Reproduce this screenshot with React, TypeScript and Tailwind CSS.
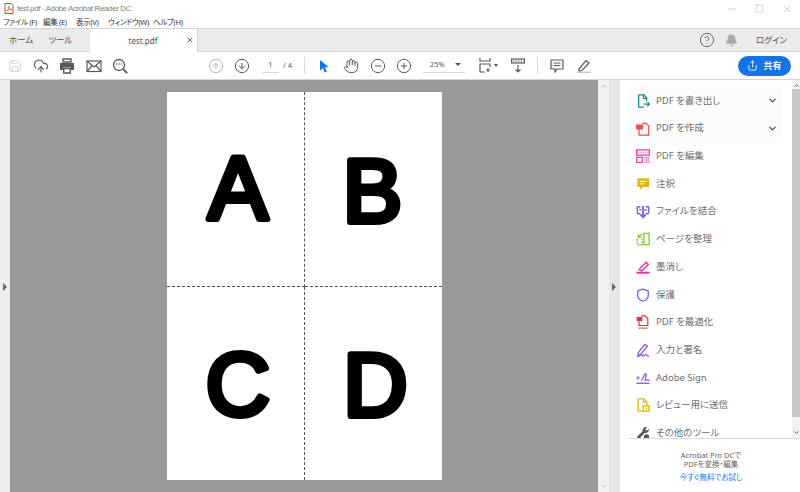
import { Bell, ChevronDown, ChevronUp, CircleArrowDown, CircleArrowUp, CircleHelp, CircleMinus, CirclePlus, CloudUpload, Hand, Minus, Save, Share, Square, X } from "lucide-react";

const font = "font-['Noto_Sans','Noto_Sans_CJK_JP',sans-serif] [font-feature-settings:'palt']";

// sidebar icons, 16x16 box
const icons: Record<string, React.ReactNode> = {
  export: (
    <g fill="none" stroke="#14908f" strokeWidth="1.500">
      <path d="M3 1h6l3 3v4M3 1v14h6" />
      <path d="M8.500 1v4h4" />
      <path d="M9 11.500h6M13 9l2.300 2.500-2.300 2.500" />
    </g>
  ),
  create: (
    <g fill="none" stroke="#ee4d4d" strokeWidth="1.400">
      <path d="M7 1.500h4.500l3 3V15H3.500V8" />
      <path d="M.8 3.500h6.500V8H.8z" fill="#ee4d4d" />
    </g>
  ),
  edit: (
    <g fill="none" stroke="#e6399b" strokeWidth="1.400">
      <rect x=".8" y="1" width="14.400" height="6" />
      <rect x=".8" y="9.500" width="6.400" height="6" />
      <path d="M9.500 10h6M9.500 12.500h6M9.500 15h6" strokeWidth="1" />
      <path d="M2 4h12" strokeWidth="2" strokeOpacity=".35" />
    </g>
  ),
  note: (
    <g>
      <path d="M1.500 1.500h13.500v10H7.500l-3 3v-3H1.500z" fill="#e0b71f" />
      <path d="M4.500 5h7.500M4.500 7.800h5" stroke="#fff" strokeWidth="1.100" />
    </g>
  ),
  combine: (
    <g fill="none" stroke="#6a5ff0" strokeWidth="1.500">
      <path d="M5 2H2.500a1.500 1.500 0 0 0-1 2.500v4a1.500 1.500 0 0 0 1 1.500H5M11 2h2.500a1.500 1.500 0 0 1 1 2.500v4a1.500 1.500 0 0 1-1 1.500H11" />
      <path d="M8 1v12.500M5 11l3 3 3-3" strokeWidth="2" />
      <path d="M3.500 5.500h3M9.500 5.500h3" />
    </g>
  ),
  organize: (
    <g fill="none" stroke="#8ccc3c" strokeWidth="1.600">
      <rect x="9" y="1.500" width="6" height="13" />
      <path d="M1.500 7.500v7h5.500v-7" strokeDasharray="2.500 1" />
      <path d="M7 2L3 5.500M2.500 2.500v3.500h3.500" />
    </g>
  ),
  redact: (
    <g fill="none" stroke="#e2329b" strokeWidth="1.600">
      <path d="M3.500 11l8-8.500 2.500 2.500-7.500 7.500z" />
      <path d="M.5 14.500h15" strokeWidth="2.200" />
    </g>
  ),
  protect: <path d="M8 1.200l6 2.300v5c0 3.500-3 5.500-6 6.500-3-1-6-3-6-6.500v-5z" fill="none" stroke="#6a6cf0" strokeWidth="1.500" />,
  optimize: (
    <g fill="none" stroke="#e2333f" strokeWidth="1.400">
      <path d="M6 1h4.500l3 3v8h-10V7" />
      <path d="M1.500 3h5v3.500h-5z" fill="#e2333f" />
      <path d="M3 15h10" strokeWidth="1.500" strokeDasharray="2 .7" />
    </g>
  ),
  fill: (
    <g fill="none" stroke="#8a50dc" strokeWidth="1.400">
      <path d="M2.500 11l7.500-9.500 3 2.200-7.500 9.300-3 .7z" />
      <path d="M1 15.200h2c2-.5 3-2.700 4-1.700s0 2 2 1 2-2 3-1 1 1.700 3 1.700" />
    </g>
  ),
  sign: (
    <g fill="none" stroke="#8a50dc" strokeWidth="1.300">
      <path d="M1 6.500l3 3M4 6.500l-3 3" />
      <path d="M6 11c2-2 4-9 5.500-8s-2 7-1 8 2-2 3-1 1 1 2 1" />
      <path d="M.5 14h15" strokeWidth="1.500" />
    </g>
  ),
  review: (
    <g>
      <path d="M2.500 1h6.500l3.500 3.500V9M2.500 1v14h5" fill="none" stroke="#e3bd14" strokeWidth="1.600" />
      <path d="M8.500 1v4h4" fill="none" stroke="#e3bd14" strokeWidth="1.200" />
      <rect x="8" y="9" width="7" height="6" fill="none" stroke="#e3bd14" strokeWidth="1.600" />
      <rect x="11" y="11" width="2" height="2" fill="#e3bd14" />
    </g>
  ),
  more: (
    <g>
      <path d="M1 12.500L7.500 6C7 3 9.500 .5 13 1.200L10.500 3.700l1.800 1.800 2.500-2.500c.5 3.200-2 5.500-5 5L3.500 15z" fill="#555" />
      <circle cx="12" cy="12.500" r="3" fill="#555" />
    </g>
  ),
};

const tools: { icon: string; label: string; chevron?: boolean }[] = [
  { icon: "export", label: "PDF を書き出し", chevron: true },
  { icon: "create", label: "PDF を作成", chevron: true },
  { icon: "edit", label: "PDF を編集" },
  { icon: "note", label: "注釈" },
  { icon: "combine", label: "ファイルを結合" },
  { icon: "organize", label: "ページを整理" },
  { icon: "redact", label: "墨消し" },
  { icon: "protect", label: "保護" },
  { icon: "optimize", label: "PDF を最適化" },
  { icon: "fill", label: "入力と署名" },
  { icon: "sign", label: "Adobe Sign" },
  { icon: "review", label: "レビュー用に送信" },
  { icon: "more", label: "その他のツール" },
];

// one quarter of the imposed page
const Cell = ({ letter, border, x, y }: { letter: string; border: string; x: number; y: number }) => (
  <div className={`flex items-center justify-center ${border}`}>
    <svg width="110" height="110" viewBox="0 0 110 110">
      <text x={x} y={y} textAnchor="middle" fontFamily="Liberation Sans" fontSize="89" fill="#000" stroke="#000" strokeWidth="6" strokeLinejoin="round">
        {letter}
      </text>
    </svg>
  </div>
);

const TriangleR = () => <div className="w-0 h-0 border-y-[4px] border-y-transparent border-l-[4px] border-l-[#666]" />;

export default function App() {
  return (
    <div className={`w-[800px] h-[492px] overflow-hidden flex flex-col bg-white text-[#555] ${font}`}>
      {/* title bar */}
      <div className="h-[17px] flex items-center bg-white">
        <svg className="ml-[4px]" width="10" height="11" viewBox="0 0 10 11">
          <path d="M1 .5h6l2 2v8H1z" fill="#fff" stroke="#d9403a" />
          <path d="M2.500 8c2-1 2.500-3 2.500-5 0 2 1 3 3 3.500-2 0-4 .5-5.500 1.500z" fill="none" stroke="#d9403a" strokeWidth=".7" />
        </svg>
        <span className="ml-[3px] text-[8px] tracking-[-0.4px] text-[#808080] font-['Liberation_Sans']">test.pdf - Adobe Acrobat Reader DC</span>
        <div className="ml-auto flex items-center text-[#a0a0a0]">
          <Minus size={12} strokeWidth={1} className="mr-[17px]" />
          <Square size={9} strokeWidth={1.200} className="mr-[17px]" />
          <X size={12} strokeWidth={1} className="mr-[7px]" />
        </div>
      </div>
      {/* menu */}
      <div className="h-[11px] flex items-center text-[7.500px] tracking-[-0.3px] leading-none text-[#333] bg-white pl-[3px] whitespace-nowrap">
        <span className="w-[40px]">ファイル (F)</span>
        <span className="w-[33px]">編集 (E)</span>
        <span className="w-[32px]">表示(V)</span>
        <span className="w-[45px]">ウィンドウ(W)</span>
        <span>ヘルプ(H)</span>
      </div>
      {/* tabs */}
      <div className="h-[24px] flex items-stretch bg-[#ebebeb] border-y border-[#d4d4d4] text-[8.500px] text-[#505050]">
        <div className="w-[90px] flex items-center pl-[9px] gap-[15px]">
          <span>ホーム</span>
          <span>ツール</span>
        </div>
        <div className="w-[108px] -mb-px bg-white flex items-center border-r border-[#d4d4d4] relative justify-center pr-[1px] text-[8px]">
          test.pdf
          <X size={8} strokeWidth={2.500} className="absolute right-[3px] top-[7px] text-[#444]" />
        </div>
        <div className="ml-auto flex items-center pr-[13px] text-[#666]">
          <CircleHelp size={16} strokeWidth={1.500} className="mr-[10px]" />
          <Bell size={13} fill="#aaa" stroke="#aaa" className="mr-[18px]" />
          <span className="text-[#505050] text-[8.500px]">ログイン</span>
        </div>
      </div>
      {/* toolbar */}
      <div className="h-[27px] flex items-center bg-white text-[#5a5a5a] text-[7.500px]">
        <div className="w-[208px] flex items-center pl-[8px] gap-[10.500px]">
          <Save size={14} strokeWidth={1.300} className="text-[#c4c4c4]" />
          <CloudUpload size={16} strokeWidth={1.700} />
          <svg width="16" height="16" viewBox="0 0 16 16">
            <path d="M4 1h8v3H4z" fill="none" stroke="#5a5a5a" strokeWidth="1.400" />
            <path d="M1 5h14v7h-3V9.500H4V12H1z" fill="#5a5a5a" />
            <path d="M4.700 10.500h6.600v4.500H4.700z" fill="none" stroke="#5a5a5a" strokeWidth="1.400" />
          </svg>
          <svg width="16" height="16" viewBox="0 0 16 16" fill="none" stroke="#5a5a5a" strokeWidth="1.200">
            <rect x="1" y="3" width="14" height="10.500" />
            <path d="M1 3l7 6 7-6M1 13.500l5-6M15 13.500l-5-6" />
          </svg>
          <svg width="16" height="16" viewBox="0 0 16 16" fill="none" stroke="#5a5a5a" strokeWidth="1.300">
            <circle cx="7" cy="7" r="5.500" />
            <path d="M11 11l4.200 4.200" strokeWidth="1.800" />
            <path d="M4 6h6" strokeDasharray="1.500 .8" strokeWidth="1" />
          </svg>
        </div>
        <CircleArrowUp size={16} strokeWidth={1.500} className="text-[#b4b4b4]" />
        <CircleArrowDown size={16} strokeWidth={1.500} className="ml-[10px]" />
        <div className="ml-[12px] w-[17px] text-center border-b border-[#d8d8d8] pb-[2px] mt-[1px]">1</div>
        <span className="ml-[4px] w-[21px]">/ 4</span>
        <div className="w-px h-[17px] bg-[#dcdcdc]" />
        <svg className="ml-[13px]" width="12" height="14" viewBox="0 0 12 14">
          <path d="M2 1v10.500l2.800-2.500 2 4.500 2-1-2-4.300h4z" fill="#1473e6" />
        </svg>
        <Hand size={16} strokeWidth={1.500} className="ml-[13px]" />
        <CircleMinus size={16} strokeWidth={1.500} className="ml-[11px]" />
        <CirclePlus size={16} strokeWidth={1.500} className="ml-[10px]" />
        <div className="ml-[11px] w-[42px] flex items-center justify-between border-b border-[#d8d8d8] pb-[2px] pl-[7px] pr-[4px] mt-[1px]">
          25%
          <div className="w-0 h-0 border-x-[3px] border-x-transparent border-t-[3px] border-t-[#555]" />
        </div>
        <svg className="ml-[13px]" width="14" height="15" viewBox="0 0 14 15" fill="none" stroke="#5a5a5a" strokeWidth="1.200">
          <path d="M2 0v3h10V0M2 14V6h10v3M2 14h5M10 10v4M8 12h4" />
        </svg>
        <div className="ml-[2px] w-0 h-0 border-x-[2.500px] border-x-transparent border-t-[3px] border-t-[#555]" />
        <svg className="ml-[13px]" width="14" height="15" viewBox="0 0 14 15" fill="none" stroke="#5a5a5a" strokeWidth="1.200">
          <rect x=".6" y="1" width="12.800" height="4" />
          <path d="M2 3h10" strokeDasharray="1.500 1" />
          <path d="M7 7v7M4.500 11.500L7 14l2.500-2.500" />
        </svg>
        <div className="w-px h-[17px] bg-[#dcdcdc] ml-[12px]" />
        <svg className="ml-[12px]" width="14" height="14" viewBox="0 0 14 14" fill="none" stroke="#5a5a5a" strokeWidth="1.200">
          <path d="M1 1h12v9H7l-2 3v-3H1z" />
          <path d="M3.500 4h7M3.500 6.500h7" strokeWidth="1" />
        </svg>
        <svg className="ml-[13px]" width="14" height="14" viewBox="0 0 14 14" fill="none" stroke="#5a5a5a" strokeWidth="1.200">
          <path d="M2 10l7-8.500 3 2.500-7 7.500-3 .5z" />
          <path d="M0 13.300h14" stroke="#c8c8c8" strokeWidth="1.400" />
        </svg>
        <div className="ml-[147px] w-[53px] h-[20px] rounded-full bg-[#1473e6] text-white text-[9px] font-bold flex items-center justify-center gap-[5px]">
          <Share size={11} strokeWidth={1.800} />
          共有
        </div>
      </div>
      {/* content */}
      <div className="flex-1 min-h-0 flex border-t border-[#d4d4d4]">
        <div className="w-[10px] bg-[#ececec] flex items-center justify-center pt-[1px]">
          <TriangleR />
        </div>
        <div className="w-[588px] bg-[#999999] pt-[12px] pl-[157px] overflow-hidden">
          <div className="w-[275px] h-[388px] bg-white grid grid-cols-[138px_137px] grid-rows-[195px_193px]">
            <Cell letter="A" border="border-r border-b border-dashed border-[#555]" x={57} y={85} />
            <Cell letter="B" border="border-b border-dashed border-[#555]" x={53.500} y={88} />
            <Cell letter="C" border="border-r border-dashed border-[#555]" x={57} y={85.500} />
            <Cell letter="D" x={56.500} y={86.500} border="" />
          </div>
        </div>
        <div className="w-[11px] bg-[#f1f1f1] flex flex-col items-center justify-between py-[2px] text-[#b0b0b0]">
          <ChevronUp size={8} strokeWidth={2} />
          <ChevronDown size={8} strokeWidth={2} />
        </div>
        <div className="w-[11px] bg-[#e6e6e6] flex items-center pl-[3px] pt-[1px]">
          <TriangleR />
        </div>
        <div className="w-[180px] flex flex-col bg-white">
          <div className="h-[358px] flex">
            <div className="w-[172px] pl-[9px] pr-[10px] pt-[7px] overflow-hidden">
              {tools.map((t) => (
                <div key={t.label} className={`h-[27.700px] flex items-center pl-[7px] pr-[4px] text-[9.500px] text-[#6e6e6e] ${t.chevron ? "bg-[#fbfbfb]" : ""}`}>
                  <svg width="14" height="14" viewBox="0 0 16 16" className="shrink-0">
                    {icons[t.icon]}
                  </svg>
                  <span className="ml-[6px]">{t.label}</span>
                  {t.chevron && <ChevronDown size={11} strokeWidth={2.500} className="ml-auto text-[#444]" />}
                </div>
              ))}
            </div>
            <div className="w-[8px] bg-[#f1f1f1] flex flex-col items-center justify-between pt-[2px] text-[#555]">
              <ChevronUp size={7} strokeWidth={3} />
              <div className="w-full h-[329px] bg-[#c8c8c8] mb-[12px]" />
              <ChevronDown size={7} strokeWidth={3} className="mb-[2px]" />
            </div>
          </div>
          <div className="ml-[9px] flex-1 border-t border-[#dcdcdc] flex flex-col items-center pt-[12px] pr-[7px] text-[7.500px] leading-[9px] text-[#666]">
            <span>Acrobat Pro DCで</span>
            <span>PDFを変換・編集</span>
            <span className="mt-[4px] text-[#1473e6] text-[7.500px]">今すぐ無料でお試し</span>
          </div>
        </div>
      </div>
    </div>
  );
}
